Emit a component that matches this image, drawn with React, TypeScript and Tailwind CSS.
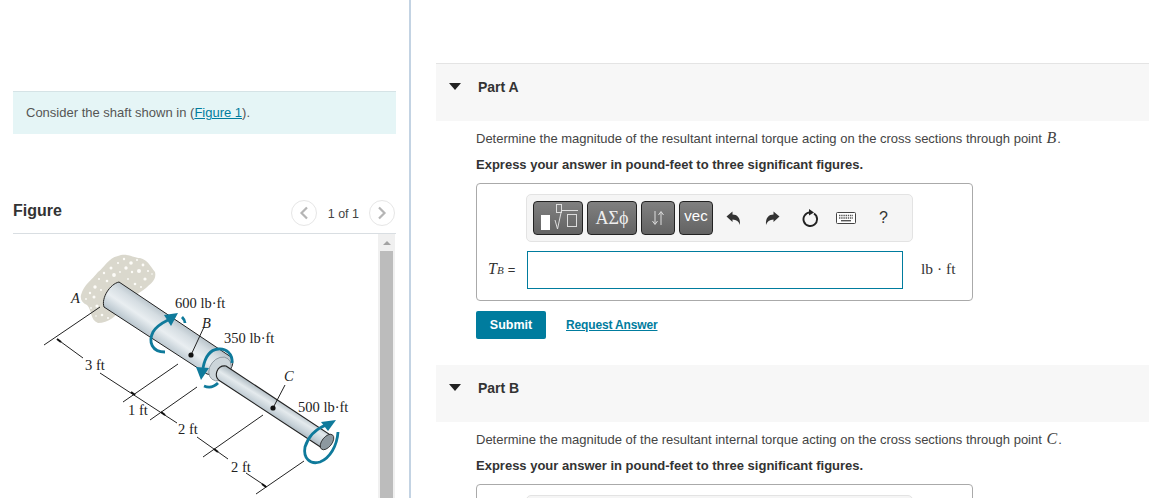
// pores of the concrete blob, the shaft covers whatever falls under it
const blobDots = [
  [124, 259, 1.2], [131, 263, 1.8], [137, 260, 1], [143, 265, 1.4], [148, 271, 1.1], [139, 271, 2], [145, 279, 1.6], [132, 272, 1.2],
  [126, 268, 1.7], [118, 263, 1.1], [111, 268, 1.5], [104, 273, 1.2], [114, 275, 1.9], [120, 272, 0.9], [107, 281, 1.3], [99, 279, 1],
  [95, 287, 1.7], [101, 290, 1.1], [90, 293, 1.2], [86, 299, 0.9], [94, 297, 1.5], [135, 284, 1.3], [128, 279, 0.9], [141, 287, 1],
  [97, 306, 1.6], [91, 308, 0.9], [102, 315, 1.3], [108, 318, 1], [96, 316, 0.8], [114, 312, 1.2], [121, 304, 0.9], [152, 274, 0.8],
];

function ShaftFigure() {
  return (
    <svg viewBox="13 234 365 264" className="h-full w-[365px] shrink-0">
      <defs>
        <linearGradient id="big" gradientUnits="userSpaceOnUse" x1="126" y1="280" x2="104" y2="312">
          <stop offset="0" stopColor="#a7b4bc" />
          <stop offset="0.3" stopColor="#d5dde2" />
          <stop offset="0.55" stopColor="#e9eef1" />
          <stop offset="0.8" stopColor="#c4cfd6" />
          <stop offset="1" stopColor="#a3b0b8" />
        </linearGradient>
        <linearGradient id="small" gradientUnits="userSpaceOnUse" x1="279" y1="398" x2="268" y2="416">
          <stop offset="0" stopColor="#a7b4bc" />
          <stop offset="0.4" stopColor="#e4eaed" />
          <stop offset="0.75" stopColor="#c4cfd6" />
          <stop offset="1" stopColor="#a3b0b8" />
        </linearGradient>
      </defs>

      <path d="M81 295C84 284 92 280 98 272C104 268 108 258 118 256C126 252 134 258 140 258C148 260 150 266 155 272C157 280 150 284 146 288C138 294 130 298 122 306C118 316 108 323 98 323C90 320 92 310 87 305C82 303 80 299 81 295Z" fill="#dad8cd" />
      {blobDots.map(([cx, cy, r], i) => (
        <circle key={i} cx={cx} cy={cy} r={r} fill="#fdfcf8" />
      ))}

      <path d="M119 282L231 357C235 362 232 370 224 377L207 374L150 337L104 307C101 298 110 284 119 282Z" fill="url(#big)" stroke="#222" strokeWidth="1" strokeLinejoin="round" />

      <ellipse cx="220" cy="369" rx="13" ry="10" transform="rotate(-52 220 369)" fill="#ccd5da" stroke="#7b868d" strokeWidth="0.7" />
      <path d="M226 366L332 436L322 448L220 381C213 376 217 365 226 366Z" fill="url(#small)" stroke="#222" strokeWidth="1.1" />
      <ellipse cx="327" cy="442" rx="9" ry="5" transform="rotate(-52 327 442)" fill="#8d989f" stroke="#222" strokeWidth="0.8" />

      <g stroke="#222" strokeWidth="1" fill="none">
        <path d="M44 345L100 307" />
        <path d="M57 339L83 358" />
        <path d="M100 373L177 423" />
        <path d="M123 402L178 364" />
        <path d="M150 420L197 387" />
        <path d="M197 437L228 459" />
        <path d="M203 457L263 415" />
        <path d="M246 473L267 487" />
        <path d="M256 494L304 461" />
        <path d="M191 355L204 327" />
        <path d="M273 408L285 385" />
      </g>
      <g stroke="#111" strokeWidth="2" fill="none">
        <path d="M57 339L61 342" />
        <path d="M131 392L135 395" />
        <path d="M161 412L165 415" />
        <path d="M214 449L218 452" />
        <path d="M262 484L266 487" />
      </g>
      <circle cx="191" cy="355" r="2.6" fill="#111" />
      <circle cx="273" cy="408" r="2.6" fill="#111" />

      <g fill="none" stroke="#0f7a9b" strokeWidth="2.8">
        <path d="M165 352C152 352 148 342 153 332C157 325 164 322 170 319" />
        <path d="M182 317C184 319 185 321 185 323" />
        <path d="M232 363C233 354 226 348 218 349C210 350 205 357 203 368" />
        <path d="M204 386C209 388 214 387 218 383" />
        <path d="M338 432C337 446 330 458 320 462C310 465 303 458 305 447C308 437 316 429 326 425" />
      </g>
      <g fill="#0f7a9b">
        <path d="M178 313L164 315L171 326Z" />
        <path d="M196 367L209 368L201 380Z" />
        <path d="M336 420L321 422L328 431Z" />
      </g>

      <g fontFamily="'Liberation Serif', serif" fontSize="14.5" fill="#222">
        <text x="175" y="308">600 lb·ft</text>
        <text x="224" y="343">350 lb·ft</text>
        <text x="298" y="412">500 lb·ft</text>
        <text x="85" y="370">3 ft</text>
        <text x="128" y="415">1 ft</text>
        <text x="178" y="434">2 ft</text>
        <text x="231" y="472">2 ft</text>
        <g fontStyle="italic">
          <text x="71" y="303">A</text>
          <text x="202" y="328">B</text>
          <text x="284" y="381">C</text>
        </g>
      </g>
    </svg>
  );
}

function AnswerToolbar() {
  return (
    <div className="ml-[49px] flex h-[48px] w-[387px] items-center rounded-[5px] border border-[#e3e3e3] bg-[#f5f5f5] pl-[6px]">
      <div className="flex gap-[4px]">
        <div className="flex h-[34px] w-[50px] items-center justify-center gap-[4px] rounded-[4px] border border-[#222] bg-gradient-to-b from-[#808080] to-[#636363] pl-[2px]">
          <div className="mt-[9px] h-[15px] w-[9px] bg-white" />
          <svg width="24" height="28" viewBox="0 0 24 28" fill="none" stroke="#ddd" strokeWidth="1">
            <rect x="2.5" y="0.5" width="5" height="8" />
            <path d="M1 16L3.5 25L7.5 6.5H24" />
            <rect x="13.5" y="10.5" width="9" height="12" />
          </svg>
        </div>
        <div className="flex h-[34px] w-[50px] items-center justify-center rounded-[4px] border border-[#222] bg-gradient-to-b from-[#808080] to-[#636363] font-['Liberation_Serif',serif] text-[18px] text-[#eee]">
          ΑΣϕ
        </div>
        <div className="flex h-[34px] w-[34px] items-center justify-center rounded-[4px] border border-[#222] bg-gradient-to-b from-[#808080] to-[#636363]">
          <svg width="14" height="16" viewBox="0 0 14 16" fill="none" stroke="#ddd" strokeWidth="1">
            <path d="M4 1V14M1.5 11L4 14.5L6.5 11" />
            <path d="M10 15V2M7.5 5L10 1.5L12.5 5" />
          </svg>
        </div>
        <div className="flex h-[34px] w-[34px] items-center justify-center rounded-[4px] border border-[#222] bg-gradient-to-b from-[#808080] to-[#636363] pb-[3px] text-[15px] text-white">
          vec
        </div>
      </div>
      <div className="flex items-center">
        <svg className="ml-[13px]" width="15" height="15" viewBox="0 0 15 15" fill="#333">
          <path d="M0.5 5.5L6.5 0.5V3.6C11 3.6 14.5 6.5 14 14C13 10.5 10.5 8.4 6.5 8.4V11Z" />
        </svg>
        <svg className="ml-[24px]" width="15" height="15" viewBox="0 0 15 15" fill="#333">
          <path d="M14.5 5.5L8.5 0.5V3.6C4 3.6 0.5 6.5 1 14C2 10.5 4.5 8.4 8.5 8.4V11Z" />
        </svg>
        <svg className="ml-[21px]" width="18" height="18" viewBox="0 0 18 18" fill="none">
          <path d="M13 4.5A6.8 6.8 0 1 1 9 3.4" stroke="#222" strokeWidth="1.9" />
          <path d="M8 0L13 3.4L8 6.6Z" fill="#222" />
        </svg>
        <svg className="ml-[17px]" width="20" height="12" viewBox="0 0 20 12" fill="none">
          <rect x="0.5" y="0.5" width="19" height="11" rx="1" fill="#fff" stroke="#444" />
          <path d="M3 3.5H17M3 6H17" stroke="#555" strokeWidth="1.4" strokeDasharray="1.4 0.8" />
          <path d="M5 8.7H15" stroke="#555" strokeWidth="1.4" />
        </svg>
        <span className="ml-[23px] text-[16px] leading-none text-[#333]">?</span>
      </div>
    </div>
  );
}

function PartHeader({ title, ruled }: { title: string; ruled?: boolean }) {
  return (
    <div className={ruled ? "flex h-[58px] items-center border-t border-[#e4e4e4] bg-[#f7f7f7] pb-[10px]" : "flex h-[57px] items-center bg-[#f7f7f7] pb-[10px]"}>
      <div className="ml-[13px] mt-[-3px] h-0 w-0 border-x-[6px] border-t-[7px] border-x-transparent border-t-[#222]" />
      <span className="ml-[17px] text-[14px] font-bold text-[#333]">{title}</span>
    </div>
  );
}

function Prompt({ letter }: { letter: string }) {
  return (
    <div className="ml-[40px] text-[13px] text-[#444]">
      <p className="mt-[8px] h-[18px] leading-[18px]">
        Determine the magnitude of the resultant internal torque acting on the cross sections through point{" "}
        <span className="ml-[1px] font-['Liberation_Serif',serif] text-[16px] italic">{letter}</span>
        <span className="ml-[1px]">.</span>
      </p>
      <p className="mt-[9px] h-[18px] font-bold leading-[18px] text-[#333]">Express your answer in pound-feet to three significant figures.</p>
    </div>
  );
}

export default function App() {
  return (
    <div className="flex h-[498px] w-[1149px] overflow-hidden bg-white font-['Liberation_Sans',Arial,sans-serif] text-[#333]">
      <div className="w-[411px] shrink-0 border-r-2 border-[#c3d3e3] pl-[13px] pr-[13px]">
        <div className="mt-[91px] flex h-[43px] items-center border-t border-[#d5e3e6] bg-[#e5f5f6] pl-[13px] text-[13px] text-[#555]">
          <span>
            Consider the shaft shown in (<a className="text-[#007c9e] underline">Figure 1</a>).
          </span>
        </div>
        <div className="mt-[65px] flex h-[35px] items-start justify-between border-b border-[#d9dee2]">
          <span className="mt-[1px] text-[16px] font-bold leading-[22px] text-[#333]">Figure</span>
          <div className="mr-[1px] mt-[1px] flex items-center text-[12.5px] text-[#444]">
            <div className="flex h-[26px] w-[26px] items-center justify-center rounded-full border border-[#e6e6e6]">
              <svg width="10" height="14" viewBox="0 0 10 14" fill="none" stroke="#b5b5b5" strokeWidth="2.2">
                <path d="M8 1.5L2.5 7L8 12.5" />
              </svg>
            </div>
            <span className="ml-[11px] mr-[10px] mt-[3px]">1 of 1</span>
            <div className="flex h-[26px] w-[26px] items-center justify-center rounded-full border border-[#e6e6e6]">
              <svg width="10" height="14" viewBox="0 0 10 14" fill="none" stroke="#b5b5b5" strokeWidth="2.2">
                <path d="M2 1.5L7.5 7L2 12.5" />
              </svg>
            </div>
          </div>
        </div>
        <div className="flex h-[264px]">
          <ShaftFigure />
          <div className="flex w-[17px] shrink-0 flex-col items-center bg-[#f0f0f0]">
            <div className="mt-[7px] h-0 w-0 border-x-[4px] border-b-[4px] border-x-transparent border-b-[#a3a3a3]" />
            <div className="mt-[6px] w-[13px] flex-1 bg-[#bcbcbc]" />
          </div>
        </div>
      </div>

      <div className="ml-[25px] flex-1 pt-[63px]">
        <PartHeader title="Part A" ruled />
        <Prompt letter="B" />
        <div className="ml-[40px] mt-[9px] w-[497px] rounded-[4px] border border-[#aaa] pt-[10px]">
          <AnswerToolbar />
          <div className="mt-[9px] flex h-[38px] items-center">
            <span className="ml-[11px] mb-[2px] w-[39px] whitespace-nowrap font-['Liberation_Serif',serif] text-[16px] text-[#333]">
              <i>T</i>
              <i className="text-[11px]">B</i> <span className="font-['Liberation_Sans',sans-serif] text-[13px]">=</span>
            </span>
            <div className="h-[38px] w-[376px] border border-[#007c9e]" />
            <span className="mb-[2px] ml-[18px] font-['Liberation_Serif',serif] text-[15.5px] text-[#333]">lb · ft</span>
          </div>
          <div className="h-[11px]" />
        </div>
        <div className="ml-[40px] mt-[10px] flex items-center">
          <button className="h-[28px] w-[70px] rounded-[2px] bg-[#007c9e] text-[12.5px] font-bold text-white">Submit</button>
          <a className="ml-[20px] text-[12px] font-bold tracking-[-0.15px] text-[#007c9e] underline">Request Answer</a>
        </div>
        <div className="mt-[26px]">
          <PartHeader title="Part B" />
        </div>
        <Prompt letter="C" />
        <div className="ml-[40px] mt-[9px] h-[60px] w-[497px] rounded-[4px] border border-[#aaa] pt-[10px]">
          <div className="ml-[49px] h-[40px] w-[387px] rounded-[5px] border border-[#e3e3e3] bg-[#f5f5f5]" />
        </div>
      </div>
    </div>
  );
}
